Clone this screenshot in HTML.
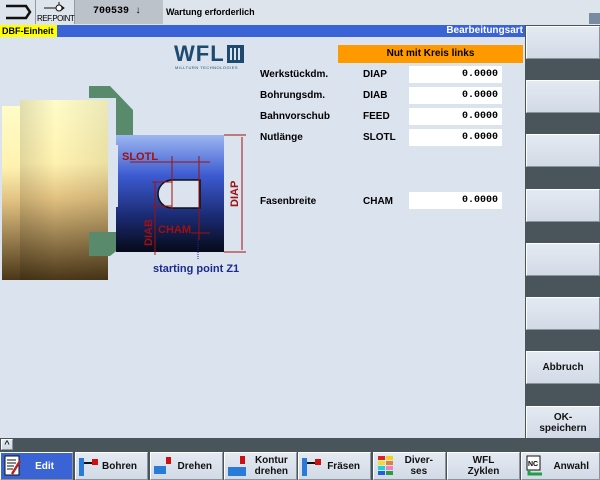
<!DOCTYPE html>
<html><head><style>
*{margin:0;padding:0;box-sizing:border-box}
body{width:600px;height:480px;overflow:hidden;background:#dbe3ee;font-family:"Liberation Sans",sans-serif;font-size:10px;position:relative}
.a{position:absolute;white-space:nowrap}
.b{font-weight:bold}
.sk{position:absolute;background:linear-gradient(#e4eaf2,#d2dae6);border-right:1px solid #8a949e;border-bottom:1px solid #8a949e;border-top:1px solid #fff;border-left:1px solid #fff;font-weight:bold;font-size:10px;color:#111;text-align:center;display:flex;align-items:center;justify-content:center;line-height:11px;white-space:nowrap}
.in{position:absolute;left:409px;width:93px;height:17px;background:#fff;text-align:right;padding-right:4px;font-weight:bold;font-family:"Liberation Mono",monospace;line-height:17px;font-size:10px}
.lb{position:absolute;left:260px;font-weight:bold;font-size:10px;white-space:nowrap}
.pm{position:absolute;left:363px;font-weight:bold;font-size:10px}
</style></head><body>
<!-- top bar -->
<div class="a" style="left:0;top:0;width:600px;height:25px;background:#dde4ec"></div>
<div class="a" style="left:0;top:0;width:36px;height:24px;background:#dde4ec;border-right:1px solid #999"></div>
<svg class="a" style="left:4px;top:3px" width="28" height="18"><path d="M2 3H22L26 9L22 15H2" fill="none" stroke="#111" stroke-width="2.5"/></svg>
<div class="a" style="left:36px;top:0;width:39px;height:24px;border-right:1px solid #999"></div>
<svg class="a" style="left:42px;top:2px" width="28" height="12"><path d="M2 6H22M18 3L22 6L18 9" stroke="#111" fill="none"/><circle cx="17" cy="6" r="3" fill="#fff" stroke="#111"/><path d="M17 0V3" stroke="#111"/></svg>
<div class="a" style="left:37px;top:14px;font-size:8px;letter-spacing:-0.5px">REF.POINT</div>
<div class="a" style="left:75px;top:0;width:88px;height:24px;background:#bcc2c9"></div>
<div class="a b" style="left:93px;top:6px;font-family:'Liberation Mono',monospace;font-size:10px">700539 ↓</div>
<div class="a b" style="left:166px;top:7px;font-size:9px">Wartung erforderlich</div>
<div class="a" style="left:589px;top:13px;width:11px;height:11px;background:#7a8aa0"></div>
<!-- header -->
<div class="a" style="left:0;top:25px;width:525px;height:12px;background:#3a63d6"></div>
<div class="a b" style="left:0;top:25px;width:57px;height:12px;background:#ffff00;font-size:9px;line-height:12px;padding-left:2px">DBF-Einheit</div>
<div class="a b" style="left:420px;top:25px;width:103px;text-align:right;color:#fff;font-size:10px;line-height:12px">Bearbeitungsart</div>
<!-- logo -->
<div class="a b" style="left:174px;top:42px;font-size:22px;color:#1d4a6e;letter-spacing:1px;line-height:24px">WFL</div>
<div class="a" style="left:227px;top:45px;width:17px;height:18px;background:#1d4a6e"></div>
<div class="a" style="left:230px;top:48px;width:2px;height:12px;background:#dbe3ee;box-shadow:4px 0 #dbe3ee,8px 0 #dbe3ee"></div>
<div class="a" style="left:175px;top:65px;font-size:4px;color:#1d4a6e;letter-spacing:.5px">MILLTURN TECHNOLOGIES</div>
<!-- form -->
<div class="a b" style="left:338px;top:45px;width:185px;height:18px;background:#ff9900;text-align:center;line-height:18px;font-size:10px">Nut mit Kreis links</div>
<div class="lb" style="top:69px">Werkstückdm.</div><div class="pm" style="top:69px">DIAP</div><div class="in" style="top:66px">0.0000</div>
<div class="lb" style="top:90px">Bohrungsdm.</div><div class="pm" style="top:90px">DIAB</div><div class="in" style="top:87px">0.0000</div>
<div class="lb" style="top:111px">Bahnvorschub</div><div class="pm" style="top:111px">FEED</div><div class="in" style="top:108px">0.0000</div>
<div class="lb" style="top:132px">Nutlänge</div><div class="pm" style="top:132px">SLOTL</div><div class="in" style="top:129px">0.0000</div>
<div class="lb" style="top:196px">Fasenbreite</div><div class="pm" style="top:196px">CHAM</div><div class="in" style="top:192px">0.0000</div>
<!-- graphic -->
<svg class="a" style="left:0;top:60px" width="260" height="220">
<defs>
<linearGradient id="y" x1="0" y1="0" x2="0" y2="1"><stop offset="0" stop-color="#fffcc8"/><stop offset=".35" stop-color="#fff2b0"/><stop offset=".55" stop-color="#e0c080"/><stop offset="1" stop-color="#4a3618"/></linearGradient>
<linearGradient id="yh" x1="0" y1="0" x2="1" y2="0"><stop offset="0" stop-color="#000" stop-opacity=".12"/><stop offset=".4" stop-color="#000" stop-opacity="0"/><stop offset="1" stop-color="#000" stop-opacity=".08"/></linearGradient>
<linearGradient id="bl" x1="0" y1="0" x2="0" y2="1"><stop offset="0" stop-color="#9cb6f0"/><stop offset=".35" stop-color="#3c5ad0"/><stop offset=".7" stop-color="#1a2a70"/><stop offset="1" stop-color="#060a18"/></linearGradient>
</defs>
<rect x="2" y="46" width="20" height="174" fill="url(#y)"/>
<rect x="20" y="40" width="88" height="180" fill="url(#y)"/>
<rect x="20" y="40" width="88" height="180" fill="url(#yh)"/>
<polygon points="89,26 110,26 133,50 133,77 116,77 116,38 89,38" fill="#5a8a6c"/>
<polygon points="89,172 116,172 116,152 133,152 133,178 110,196 89,196" fill="#5a8a6c"/>
<rect x="116" y="75" width="108" height="117" fill="url(#bl)"/>
<rect x="108" y="85" width="10" height="62" fill="#dbe3ee"/>
<path d="M172 120H200V148H172A14 14 0 0 1 172 120Z" fill="#dbe3ee" stroke="#111" stroke-width="1.5"/>
<g stroke="#a01010" fill="none" stroke-width="1">
<path d="M224 75H246M224 192H246M242 77V190"/>
<path d="M130 102H210M172 96V150M199 96V180M155 122V195M152 122H172M152 146H172M191 173H210"/>
</g>
<text x="122" y="100" font-family="Liberation Sans" font-weight="bold" font-size="11" fill="#a01010">SLOTL</text>
<text x="158" y="173" font-family="Liberation Sans" font-weight="bold" font-size="11" fill="#a01010">CHAM</text>
<text transform="translate(152,186) rotate(-90)" font-family="Liberation Sans" font-weight="bold" font-size="11" fill="#a01010">DIAB</text>
<text transform="translate(238,147) rotate(-90)" font-family="Liberation Sans" font-weight="bold" font-size="11" fill="#a01010">DIAP</text>
<path d="M198 178V200" stroke="#1a2a90" stroke-dasharray="1,1"/>
<text x="153" y="212" font-family="Liberation Sans" font-weight="bold" font-size="11" fill="#1a2a90">starting point Z1</text>
</svg>
<!-- right softkeys -->
<div class="a" style="left:525px;top:25px;width:75px;height:413px;background:#49545b"></div>
<div class="sk" style="left:526px;top:26px;width:74px;height:33px"></div>
<div class="sk" style="left:526px;top:80px;width:74px;height:33px"></div>
<div class="sk" style="left:526px;top:134px;width:74px;height:33px"></div>
<div class="sk" style="left:526px;top:189px;width:74px;height:33px"></div>
<div class="sk" style="left:526px;top:243px;width:74px;height:33px"></div>
<div class="sk" style="left:526px;top:297px;width:74px;height:33px"></div>
<div class="sk" style="left:526px;top:351px;width:74px;height:33px">Abbruch</div>
<div class="sk" style="left:526px;top:406px;width:74px;height:33px">OK-<br>speichern</div>
<!-- bottom -->
<div class="a" style="left:0;top:438px;width:600px;height:42px;background:#49545b"></div>
<div class="sk" style="left:1px;top:439px;width:12px;height:11px;font-size:9px">^</div>
<div class="sk" style="left:0;top:452px;width:73px;height:28px;background:#3a63d6;color:#fff;justify-content:flex-end;padding-right:18px">Edit</div>
<svg class="a" style="left:4px;top:455px" width="18" height="22"><rect x="1" y="1" width="14" height="19" fill="#fff" stroke="#111"/><path d="M3 5H12M3 8H12M3 11H10M3 14H9" stroke="#111"/><path d="M8 19L16 6" stroke="#c02020" stroke-width="2.5"/></svg>
<div class="sk" style="left:75px;top:452px;width:73px;height:28px;justify-content:flex-end;padding-right:10px">Bohren</div>
<div class="sk" style="left:150px;top:452px;width:73px;height:28px;justify-content:flex-end;padding-right:10px">Drehen</div>
<div class="sk" style="left:224px;top:452px;width:73px;height:28px;justify-content:flex-end;padding-right:8px">Kontur<br>drehen</div>
<div class="sk" style="left:298px;top:452px;width:73px;height:28px;justify-content:flex-end;padding-right:10px">Fräsen</div>
<div class="sk" style="left:373px;top:452px;width:73px;height:28px;justify-content:flex-end;padding-right:12px">Diver-<br>ses</div>
<div class="sk" style="left:447px;top:452px;width:73px;height:28px">WFL<br>Zyklen</div>
<div class="sk" style="left:521px;top:452px;width:79px;height:28px;justify-content:flex-end;padding-right:10px">Anwahl</div>
<!-- small icons -->
<div class="a" style="left:79px;top:458px;width:5px;height:18px;background:#2a7ad8"></div><div class="a" style="left:84px;top:462px;width:8px;height:2px;background:#111"></div><div class="a" style="left:92px;top:459px;width:6px;height:6px;background:#d01010"></div>
<div class="a" style="left:154px;top:466px;width:12px;height:8px;background:#2a7ad8"></div><div class="a" style="left:166px;top:457px;width:5px;height:7px;background:#d01010"></div>
<div class="a" style="left:228px;top:467px;width:18px;height:9px;background:#2a7ad8"></div><div class="a" style="left:240px;top:456px;width:5px;height:8px;background:#d01010"></div>
<div class="a" style="left:302px;top:458px;width:5px;height:18px;background:#2a7ad8"></div><div class="a" style="left:307px;top:462px;width:8px;height:2px;background:#111"></div><div class="a" style="left:315px;top:459px;width:6px;height:6px;background:#d01010"></div>
<svg class="a" style="left:378px;top:456px" width="18" height="20"><rect x="0" y="0" width="7" height="4" fill="#e02020"/><rect x="8" y="0" width="7" height="4" fill="#f0d020"/><rect x="0" y="5" width="7" height="4" fill="#f0e020"/><rect x="8" y="5" width="7" height="4" fill="#e08040"/><rect x="0" y="10" width="7" height="4" fill="#20d0e0"/><rect x="8" y="10" width="7" height="4" fill="#f080c0"/><rect x="0" y="15" width="7" height="4" fill="#2060e0"/><rect x="8" y="15" width="7" height="4" fill="#20a040"/></svg>
<svg class="a" style="left:526px;top:455px" width="20" height="22"><rect x="1" y="1" width="13" height="14" fill="#fff" stroke="#111"/><text x="2" y="11" font-size="7" font-weight="bold" font-family="Liberation Sans">NC</text><path d="M3 15V19H16" stroke="#20a040" stroke-width="3" fill="none"/></svg>
</body></html>
